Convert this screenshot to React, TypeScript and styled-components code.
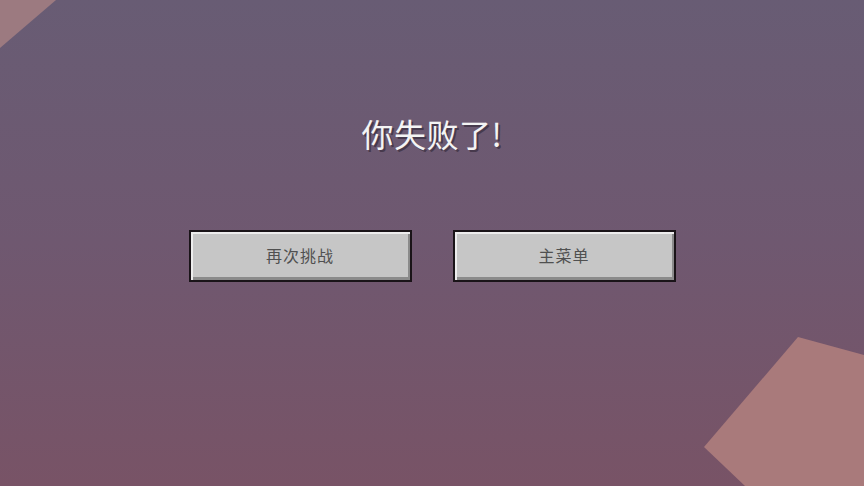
import styled, { createGlobalStyle } from "styled-components";

const GlobalStyle = createGlobalStyle`
  html, body {
    margin: 0;
    padding: 0;
    width: 100%;
    height: 100%;
    overflow: hidden;
  }
  #root {
    height: 100%;
  }
`;

const Screen = styled.div`
  position: relative;
  width: 864px;
  height: 486px;
  overflow: hidden;
  background: linear-gradient(180deg, #685c74 0%, #6f5870 50%, #785366 100%);
  font-family: "Noto Sans CJK SC", "Noto Sans", sans-serif;
  display: flex;
  flex-direction: column;
  align-items: center;
`;

const Decor = styled.svg`
  position: absolute;
  inset: 0;
  width: 100%;
  height: 100%;
  pointer-events: none;
`;

const Title = styled.h1`
  position: relative;
  margin: 110px 0 0;
  font-size: 32px;
  line-height: 46px;
  font-weight: 400;
  color: #f4f4f4;
  text-shadow: 2px 2px 0 rgba(40, 30, 45, 0.55);
  letter-spacing: 0.5px;
`;

const ButtonRow = styled.div`
  position: relative;
  display: flex;
  gap: 41px;
  margin-top: 74px;
`;

const MenuButton = styled.button`
  width: 223px;
  height: 52px;
  box-sizing: border-box;
  border: 2px solid #1a1418;
  background: #c6c6c6;
  box-shadow: inset 2px 2px 0 #ededed, inset -2px -3px 0 #8b8b8b;
  font-family: "Noto Sans CJK SC", "Noto Sans", sans-serif;
  font-size: 16px;
  color: #505050;
  letter-spacing: 1px;
  cursor: pointer;
  padding: 0 0 2px;
`;

export default function App() {
  return (
    <>
      <GlobalStyle />
      <Screen>
        <Decor viewBox="0 0 864 486">
          <polygon points="0,0 56,0 0,48" fill="#9c7a80" />
          <polygon points="798,337 864,355 864,486 745,486 704,447" fill="#a97a7b" />
        </Decor>
        <Title>你失败了!</Title>
        <ButtonRow>
          <MenuButton>再次挑战</MenuButton>
          <MenuButton>主菜单</MenuButton>
        </ButtonRow>
      </Screen>
    </>
  );
}
